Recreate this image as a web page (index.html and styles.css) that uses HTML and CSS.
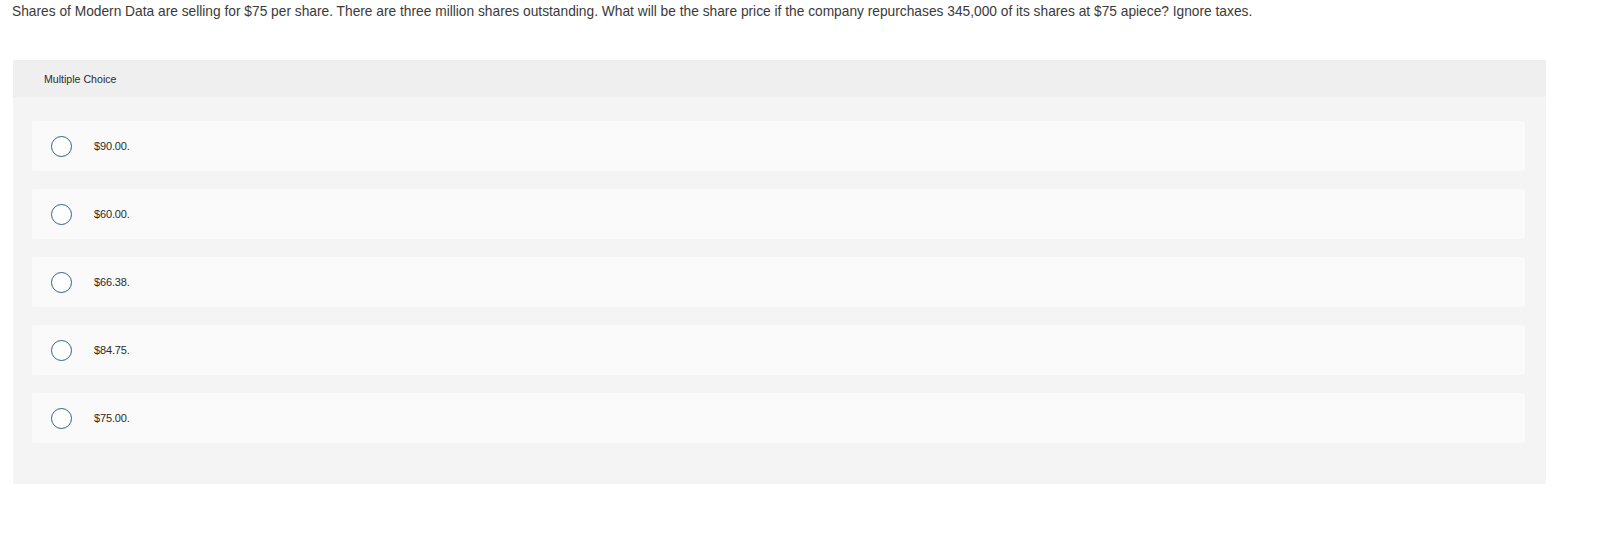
FILE: index.html
```html
<!DOCTYPE html>
<html>
<head>
<meta charset="utf-8">
<link rel="stylesheet" href="styles.css">
</head>
<body>
<p class="question">Shares of Modern Data are selling for $75 per share. There are three million shares outstanding. What will be the share price if the company repurchases 345,000 of its shares at $75 apiece? Ignore taxes.</p>
<section class="mc">
  <div class="mc-header">Multiple Choice</div>
  <div class="options">
    <div class="option"><span class="radio"></span><span class="label">$90.00.</span></div>
    <div class="option"><span class="radio"></span><span class="label">$60.00.</span></div>
    <div class="option"><span class="radio"></span><span class="label">$66.38.</span></div>
    <div class="option"><span class="radio"></span><span class="label">$84.75.</span></div>
    <div class="option"><span class="radio"></span><span class="label">$75.00.</span></div>
  </div>
</section>
</body>
</html>
```
FILE: styles.css
```css
html, body {
  margin: 0;
  padding: 0;
  background: #ffffff;
}
body {
  font-family: "Liberation Sans", Arial, sans-serif;
  color: #333333;
}
.question {
  margin: 0;
  padding: 4px 12px 0 12px;
  font-size: 13.75px;
  line-height: 16px;
  color: #3a3a3a;
}
.mc {
  margin: 40px 0 0 13px;
  width: 1533px;
  background: #f4f4f4;
  border-radius: 2px;
}
.mc-header {
  height: 37px;
  display: flex;
  align-items: center;
  padding-left: 31px;
  background: #efefef;
  font-size: 10.6px;
  color: #2b2b2b;
  border-radius: 2px 2px 0 0;
}
.options {
  display: flex;
  flex-direction: column;
  gap: 18px;
  padding: 24px 21px 41px 19px;
}
.option {
  height: 50px;
  display: flex;
  align-items: center;
  background: #fafafa;
  border-radius: 3px;
  padding-left: 19px;
}
.radio {
  width: 19px;
  height: 19px;
  border: 1.5px solid #2e5f93;
  border-radius: 50%;
  background: #ffffff;
  flex: none;
}
.label {
  margin-left: 22px;
  font-size: 11px;
  color: #2b2b2b;
  letter-spacing: -0.15px;
}
```
